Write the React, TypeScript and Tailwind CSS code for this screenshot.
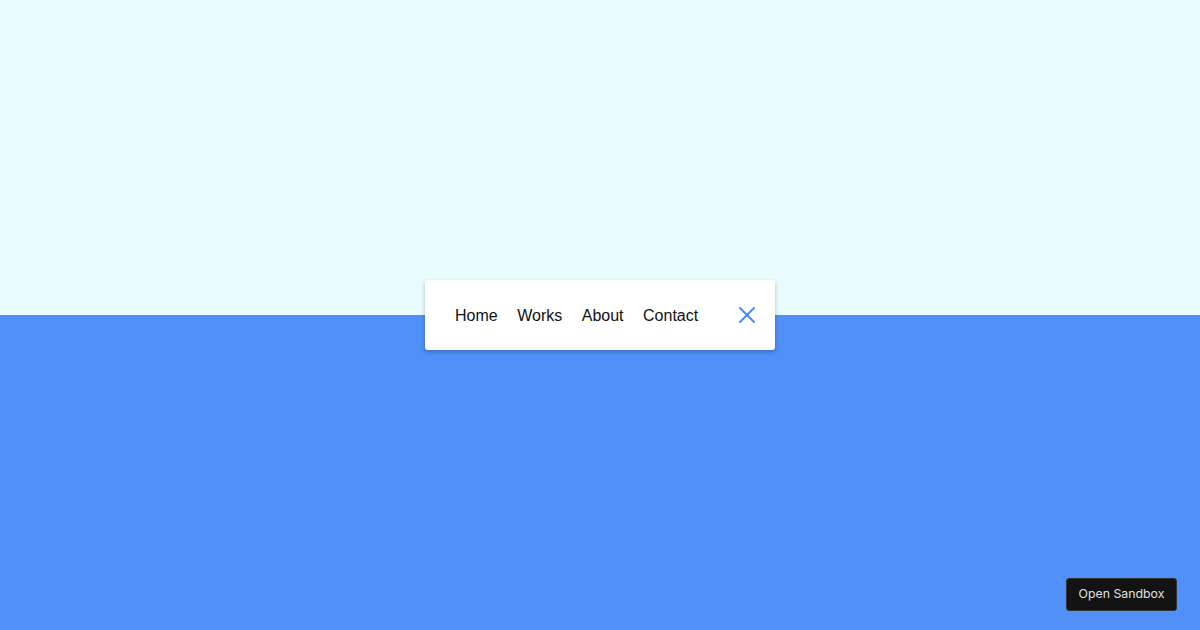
import { X } from 'lucide-react';

export default function App() {
  const links = ['Home', 'Works', 'About', 'Contact'];

  return (
    <div className="relative h-[630px] w-[1200px] overflow-hidden font-['Liberation_Sans',Arial,sans-serif]">
      {/* split background */}
      <div className="flex h-full flex-col">
        <div className="h-[315px] bg-[#e8fcff]" />
        <div className="flex-1 bg-[#5190f8]" />
      </div>

      {/* nav card */}
      <div className="absolute left-[425px] top-[280px] flex h-[70px] w-[350px] items-center rounded-[3px] bg-white pl-[30px] pr-[14px] shadow-[0_2px_4px_rgba(0,0,0,0.25)]">
        <nav className="flex items-center gap-[19.5px] pt-[2px] text-[16px] text-[#111]">
          {links.map((l) => (
            <a key={l} href="#" className="leading-none">
              {l}
            </a>
          ))}
        </nav>
        <button className="ml-auto flex h-[28px] w-[28px] items-center justify-center text-[#4b8cf5]">
          <X size={28} strokeWidth={1.7} />
        </button>
      </div>

      {/* open sandbox */}
      <button className="absolute bottom-[19px] right-[23px] h-[33px] w-[111px] rounded-[3px] border border-[#333] bg-[#131313] text-[12.3px] text-[#e0e0e0] font-['Inter',sans-serif]">
        Open Sandbox
      </button>
    </div>
  );
}
